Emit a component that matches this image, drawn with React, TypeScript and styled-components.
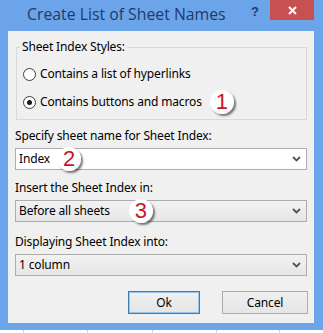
import React from "react";
import styled, { createGlobalStyle } from "styled-components";

const Global = createGlobalStyle`
  html, body { margin: 0; padding: 0; }
  body {
    width: 323px; height: 333px; overflow: hidden; background: #ffffff;
    font-family: "Noto Sans", "Open Sans", sans-serif;
  }
`;

const Page = styled.div`
  display: flex;
  flex-direction: column;
  width: 323px;
  height: 333px;
`;

const Window = styled.div`
  display: flex;
  flex-direction: column;
  height: 330px;
  box-sizing: border-box;
  padding: 0 9px 7px 8px;
  background: #6ca4e9;
`;

const TitleBar = styled.div`
  display: flex;
  align-items: flex-start;
  height: 31px;
  flex-shrink: 0;
`;

const Title = styled.div`
  flex: 1;
  padding: 4px 0 0 19px;
  font-family: "Open Sans", "Noto Sans", sans-serif;
  font-size: 15.8px;
  line-height: 20px;
  color: #213a6b;
  white-space: nowrap;
`;

const HelpButton = styled.div`
  width: 22px;
  padding-top: 4px;
  font-family: "Liberation Sans", sans-serif;
  font-weight: bold;
  font-size: 13px;
  line-height: 16px;
  color: #213a6b;
  text-align: center;
  margin-right: 4px;
`;

const CloseButton = styled.div`
  width: 44px;
  height: 20px;
  background: #c75050;
  color: #ffffff;
  display: flex;
  align-items: center;
  justify-content: center;
`;

const Content = styled.div`
  flex: 1;
  display: flex;
  flex-direction: column;
  background: #f0f0f0;
  padding: 8px 7px 9px 7px;
  font-size: 12px;
  line-height: 16px;
  letter-spacing: -0.15px;
  color: #000;
`;

const Group = styled.fieldset`
  margin: 0 0 0 1px;
  padding: 9px 6px 7px 6px;
  border: 1px solid #d8d8d8;
  min-width: 0;
  display: flex;
  flex-direction: column;
  gap: 8px;
`;

const Legend = styled.legend`
  margin-left: -3px;
  padding: 0 2px;
  font-size: 12px;
  line-height: 16px;
`;

const RadioRow = styled.label`
  display: flex;
  align-items: center;
  height: 20px;
  gap: 4px;
  white-space: nowrap;
`;

const RadioCircle = styled.span<{ $checked?: boolean }>`
  width: 13px;
  height: 13px;
  box-sizing: border-box;
  border-radius: 50%;
  border: 1px solid #3c3c3c;
  background: #ffffff;
  display: flex;
  align-items: center;
  justify-content: center;
  &::after {
    content: "";
    width: 5px;
    height: 5px;
    border-radius: 50%;
    background: #1a1a1a;
    display: ${(p) => (p.$checked ? "block" : "none")};
  }
`;

const FieldLabel = styled.div<{ $top: number }>`
  margin-top: ${(p) => p.$top}px;
  white-space: nowrap;
`;

const Combo = styled.div<{ $editable?: boolean }>`
  display: flex;
  align-items: center;
  height: 22px;
  margin-top: 4px;
  box-sizing: border-box;
  border: 1px solid ${(p) => (p.$editable ? "#abadb3" : "#acacac")};
  background: ${(p) => (p.$editable ? "#ffffff" : "linear-gradient(#f2f2f2, #e6e6e6)")};
  padding: 0 5px 0 3px;
`;

const ComboText = styled.div`
  flex: 1;
  display: flex;
  align-items: center;
  white-space: nowrap;
`;

const Badge = styled.span<{ $gap: number }>`
  display: inline-flex;
  align-items: center;
  justify-content: center;
  width: 24px;
  height: 24px;
  margin: -5px 0 -5px ${(p) => p.$gap}px;
  border-radius: 50%;
  background: radial-gradient(circle at 40% 35%, #ffffff 60%, #f0f0f0 100%);
  box-shadow: 2px 2px 2px rgba(0, 0, 0, 0.5);
  font-family: "Liberation Sans", sans-serif;
  font-size: 22px;
  line-height: 24px;
  letter-spacing: 0;
  color: #c8161d;
`;

const ButtonRow = styled.div`
  margin-top: auto;
  display: flex;
  justify-content: flex-end;
  gap: 22px;
  margin-right: -1px;
`;

const Button = styled.div<{ $default?: boolean; $w: number }>`
  width: ${(p) => p.$w}px;
  height: 23px;
  box-sizing: border-box;
  border: 1px solid ${(p) => (p.$default ? "#3c7fb1" : "#acacac")};
  box-shadow: ${(p) => (p.$default ? "inset 0 0 0 1px #93c5ee" : "none")};
  background: linear-gradient(#f0f0f0, #e5e5e5);
  display: flex;
  align-items: center;
  justify-content: center;
`;

const SheetStrip = styled.div`
  flex: 1;
  display: grid;
  grid-template-columns: 24px 64px 65px 64px 63px 1fr;
  background: #ffffff;
`;

const StripCell = styled.div`
  border-right: 1px solid #d4d4d4;
  &:last-child { border-right: none; }
`;

const Chevron = () => (
  <svg width="9" height="6" viewBox="0 0 9 6">
    <path d="M1 1 L4.5 4.5 L8 1" fill="none" stroke="#555" strokeWidth="1.8" />
  </svg>
);

const CloseGlyph = () => (
  <svg width="9" height="9" viewBox="0 0 9 9">
    <path d="M1 1 L8 8 M8 1 L1 8" stroke="#fff" strokeWidth="2" />
  </svg>
);

export default function App() {
  return (
    <Page>
      <Global />
      <Window>
        <TitleBar>
          <Title>Create List of Sheet Names</Title>
          <HelpButton>?</HelpButton>
          <CloseButton>
            <CloseGlyph />
          </CloseButton>
        </TitleBar>
        <Content>
          <Group>
            <Legend>Sheet Index Styles:</Legend>
            <RadioRow>
              <RadioCircle />
              Contains a list of hyperlinks
            </RadioRow>
            <RadioRow>
              <RadioCircle $checked />
              Contains buttons and macros
              <Badge $gap={4}>1</Badge>
            </RadioRow>
          </Group>
          <FieldLabel $top={8}>Specify sheet name for Sheet Index:</FieldLabel>
          <Combo $editable>
            <ComboText>
              Index
              <Badge $gap={7}>2</Badge>
            </ComboText>
            <Chevron />
          </Combo>
          <FieldLabel $top={10}>Insert the Sheet Index in:</FieldLabel>
          <Combo>
            <ComboText>
              Before all sheets
              <Badge $gap={19}>3</Badge>
            </ComboText>
            <Chevron />
          </Combo>
          <FieldLabel $top={12}>Displaying Sheet Index into:</FieldLabel>
          <Combo>
            <ComboText>1 column</ComboText>
            <Chevron />
          </Combo>
          <ButtonRow>
            <Button $default $w={72}>Ok</Button>
            <Button $w={86}>Cancel</Button>
          </ButtonRow>
        </Content>
      </Window>
      <SheetStrip>
        <StripCell />
        <StripCell />
        <StripCell />
        <StripCell />
        <StripCell />
        <StripCell />
      </SheetStrip>
    </Page>
  );
}
